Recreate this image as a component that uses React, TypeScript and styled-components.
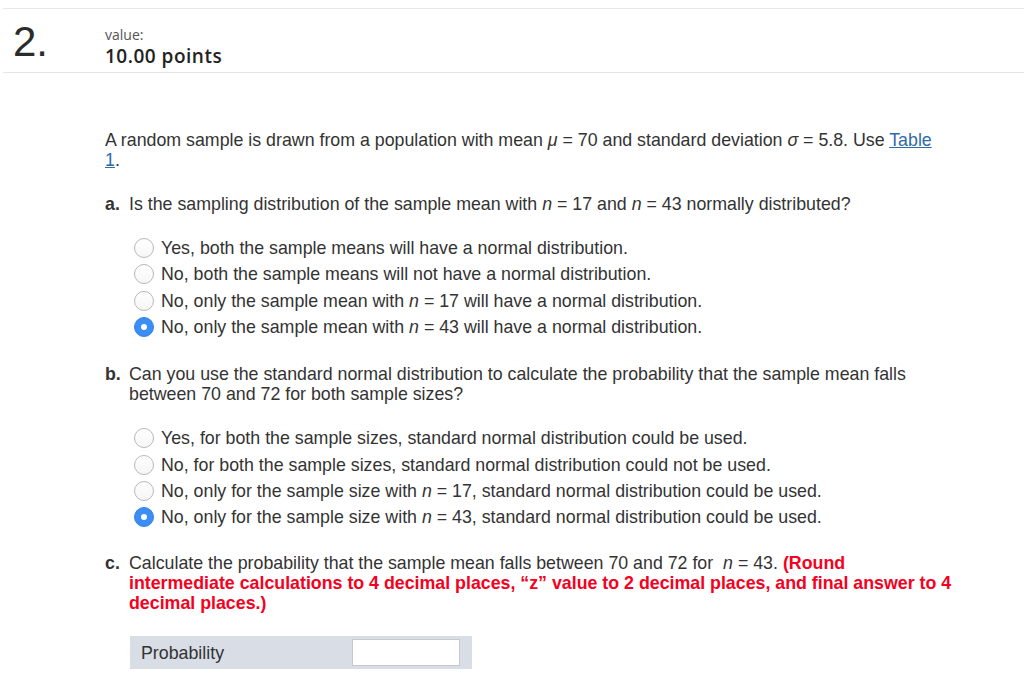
import React from "react";
import styled, { createGlobalStyle } from "styled-components";

const GlobalStyle = createGlobalStyle`
  html, body {
    margin: 0;
    padding: 0;
    background: #fff;
  }
  body {
    font-family: "Liberation Sans", Arial, sans-serif;
    color: #333;
  }
`;

type Option = { text: React.ReactNode; checked?: boolean };

const partA: Option[] = [
  { text: "Yes, both the sample means will have a normal distribution." },
  { text: "No, both the sample means will not have a normal distribution." },
  {
    text: (
      <>
        No, only the sample mean with <i>n</i> = 17 will have a normal distribution.
      </>
    ),
  },
  {
    text: (
      <>
        No, only the sample mean with <i>n</i> = 43 will have a normal distribution.
      </>
    ),
    checked: true,
  },
];

const partB: Option[] = [
  { text: "Yes, for both the sample sizes, standard normal distribution could be used." },
  { text: "No, for both the sample sizes, standard normal distribution could not be used." },
  {
    text: (
      <>
        No, only for the sample size with <i>n</i> = 17, standard normal distribution could be used.
      </>
    ),
  },
  {
    text: (
      <>
        No, only for the sample size with <i>n</i> = 43, standard normal distribution could be used.
      </>
    ),
    checked: true,
  },
];

const OptionList = ({ options }: { options: Option[] }) => (
  <SOptions>
    {options.map((o, i) => (
      <SOptionRow key={i}>
        <SRadio checked={!!o.checked} />
        <span>{o.text}</span>
      </SOptionRow>
    ))}
  </SOptions>
);

export default function App() {
  return (
    <>
      <GlobalStyle />
      <SPage>
        <SHeader>
          <SNumber>2.</SNumber>
          <SValue>
            <SValueLabel>value:</SValueLabel>
            <SPoints>10.00 points</SPoints>
          </SValue>
        </SHeader>

        <SContent>
          <SIntro>
            A random sample is drawn from a population with mean <i>μ</i> = 70 and standard
            deviation <i>σ</i> = 5.8. Use <SLink href="#">Table</SLink>
            <br />
            <SLink href="#">1</SLink>.
          </SIntro>

          <SPart top={24}>
            <SPartLabel>a.</SPartLabel>
            <div>
              Is the sampling distribution of the sample mean with <i>n</i> = 17 and <i>n</i> = 43
              normally distributed?
            </div>
          </SPart>
          <OptionList options={partA} />

          <SPart top={24}>
            <SPartLabel>b.</SPartLabel>
            <div>
              Can you use the standard normal distribution to calculate the probability that the
              sample mean falls
              <br />
              between 70 and 72 for both sample sizes?
            </div>
          </SPart>
          <OptionList options={partB} />

          <SPart top={23}>
            <SPartLabel>c.</SPartLabel>
            <div>
              Calculate the probability that the sample mean falls between 70 and 72 for&nbsp;{" "}
              <i>n</i> = 43.{" "}
              <SHint>
                (Round
                <br />
                intermediate calculations to 4 decimal places, “z” value to 2 decimal places, and
                final answer to 4
                <br />
                decimal places.)
              </SHint>
            </div>
          </SPart>

          <SAnswerBox>
            <span>Probability</span>
            <SInput />
          </SAnswerBox>
        </SContent>
      </SPage>
    </>
  );
}

const SPage = styled.div`
  padding-top: 8px;
  min-height: 698px;
  box-sizing: border-box;
`;

const SHeader = styled.div`
  display: flex;
  align-items: center;
  height: 63px;
  border-top: 1px solid #e8e8e8;
  border-bottom: 1px solid #e6e6e6;
  margin-left: 3px;
`;

const SNumber = styled.div`
  width: 102px;
  padding-left: 10px;
  box-sizing: border-box;
  font-size: 42px;
  line-height: 42px;
  color: #2b2b2b;
  margin-top: 2px;
`;

const SValue = styled.div`
  display: flex;
  flex-direction: column;
  font-family: "Open Sans", "Liberation Sans", sans-serif;
  margin-top: 12px;
`;

const SValueLabel = styled.span`
  font-size: 14px;
  line-height: 18px;
  color: #555;
`;

const SPoints = styled.span`
  font-size: 19px;
  line-height: 24px;
  font-weight: 600;
  letter-spacing: 0.5px;
  color: #222;
`;

const SContent = styled.div`
  padding-left: 105px;
  width: 880px;
  font-size: 17.8px;
  line-height: 20px;
`;

const SIntro = styled.p`
  margin: 57px 0 0;
`;

const SLink = styled.a`
  color: #2f6aa8;
  text-decoration: underline;
`;

const SPart = styled.div<{ top: number }>`
  display: flex;
  margin-top: ${(p) => p.top}px;
`;

const SPartLabel = styled.span`
  flex: 0 0 24px;
  font-weight: bold;
`;

const SHint = styled.b`
  color: #f5001e;
`;

const SOptions = styled.div`
  margin: 21px 0 0 29px;
  display: flex;
  flex-direction: column;
`;

const SOptionRow = styled.div`
  display: flex;
  align-items: center;
  height: 26.3px;
  gap: 7px;
`;

const SRadio = styled.span<{ checked: boolean }>`
  width: 20px;
  height: 20px;
  border-radius: 50%;
  box-sizing: border-box;
  flex: 0 0 20px;
  display: flex;
  align-items: center;
  justify-content: center;
  background: ${(p) => (p.checked ? "#3b8ef3" : "linear-gradient(#fff, #f6f6f6)")};
  border: 1px solid ${(p) => (p.checked ? "#3483ea" : "#b8b8b8")};
  &::after {
    content: "";
    display: ${(p) => (p.checked ? "block" : "none")};
    width: 6px;
    height: 6px;
    border-radius: 50%;
    background: #fff;
  }
`;

const SAnswerBox = styled.div`
  margin: 23px 0 0 25px;
  width: 342px;
  height: 33px;
  box-sizing: border-box;
  background: #d8dde6;
  display: flex;
  align-items: center;
  justify-content: space-between;
  padding: 0 12px 0 11px;
  color: #333;
`;

const SInput = styled.input`
  width: 108px;
  height: 27px;
  box-sizing: border-box;
  border: 1px solid #c8c8c8;
  background: #fff;
  outline: none;
`;
